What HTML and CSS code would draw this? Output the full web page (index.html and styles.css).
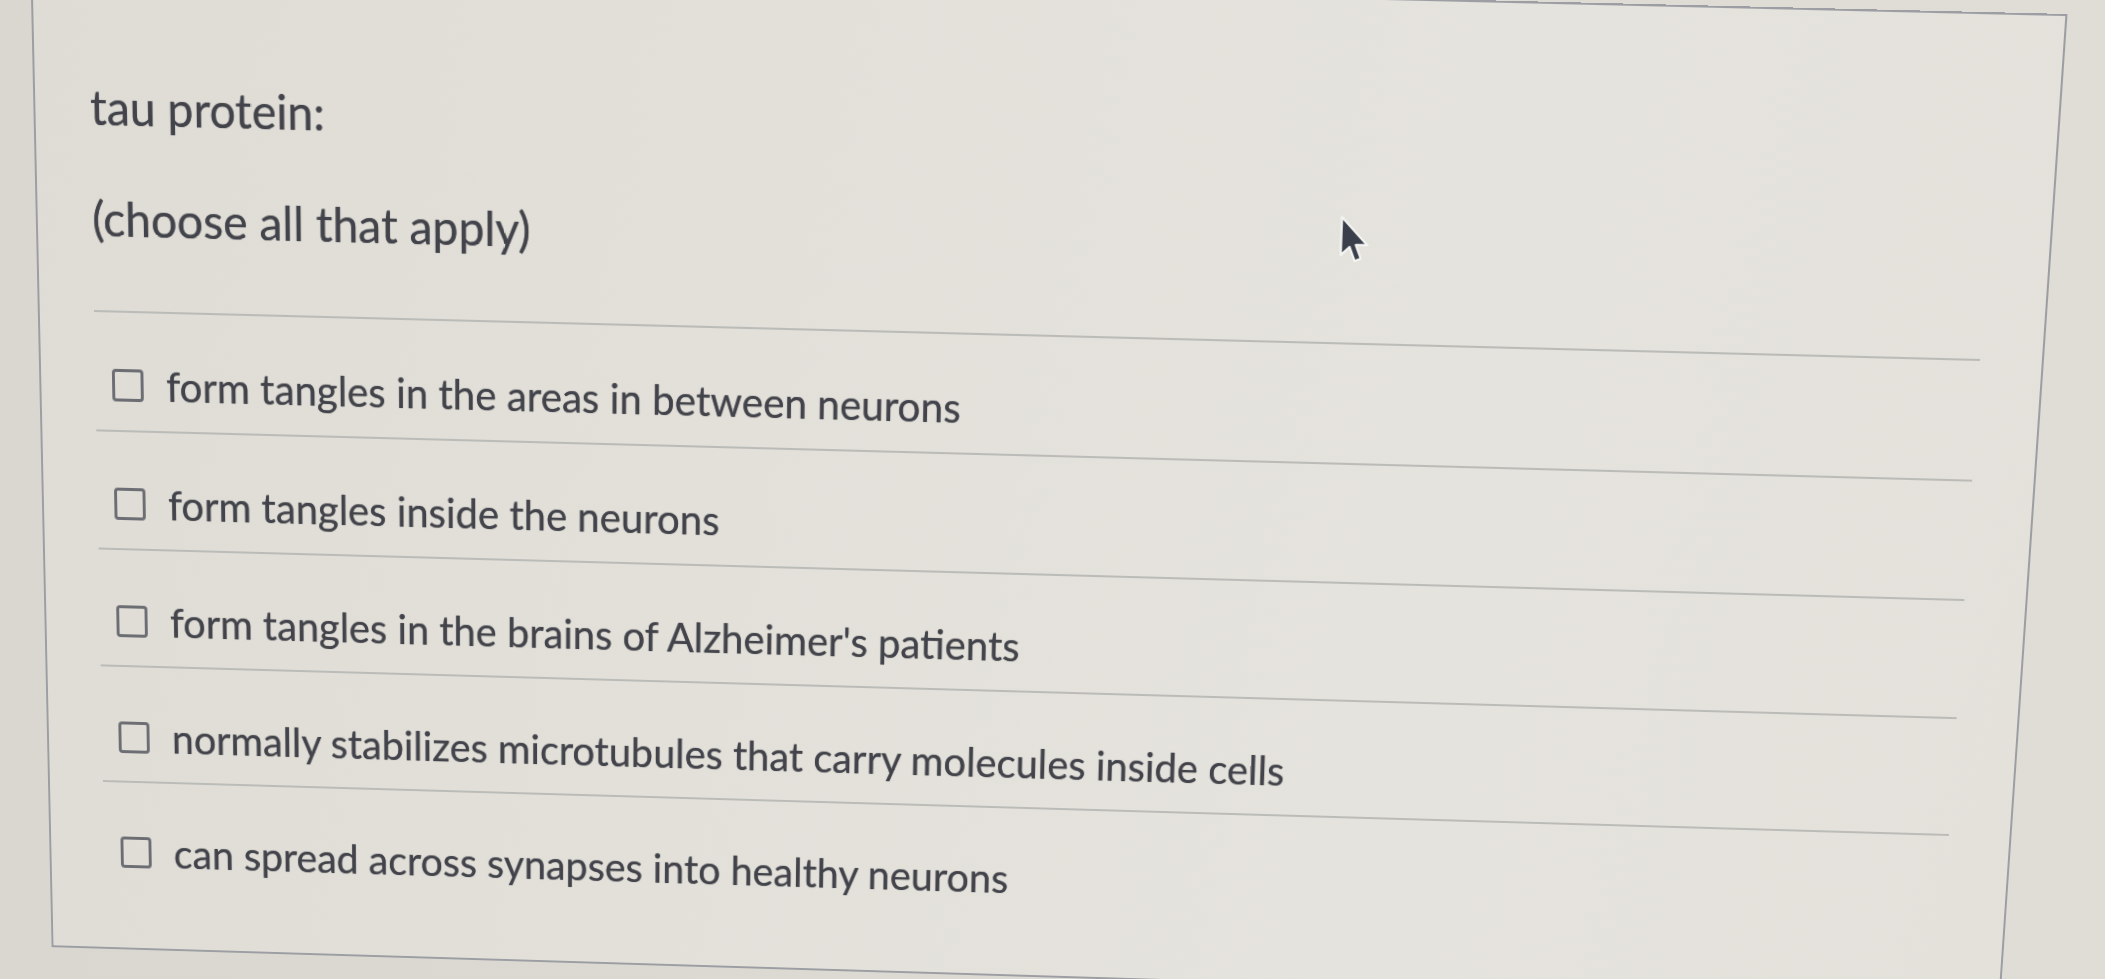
FILE: index.html
```html
<!DOCTYPE html>
<html lang="en">
<head>
<meta charset="utf-8">
<title>tau protein</title>
<link rel="stylesheet" href="styles.css">
</head>
<body>
<div class="screen">
  <div class="stage">
    <div class="panel">
      <div class="question">
        <p class="q-title">tau protein:</p>
        <p class="q-hint">(choose all that apply)</p>
      </div>
      <ul class="answers">
        <li class="answer"><span class="box"></span><span class="label">form tangles in the areas in between neurons</span></li>
        <li class="answer"><span class="box"></span><span class="label">form tangles inside the neurons</span></li>
        <li class="answer"><span class="box"></span><span class="label">form tangles in the brains of Alzheimer's patients</span></li>
        <li class="answer"><span class="box"></span><span class="label">normally stabilizes microtubules that carry molecules inside cells</span></li>
        <li class="answer"><span class="box"></span><span class="label">can spread across synapses into healthy neurons</span></li>
      </ul>
      <svg class="cursor" width="32" height="51" viewBox="0 0 26 42" aria-hidden="true">
        <path d="M2 2 L2 32 L9 25.5 L13.5 36.5 L18.5 34.5 L14 23.8 L23.5 23.8 Z" fill="#3a3f4b" stroke="#f4f4f2" stroke-width="1.8" stroke-linejoin="round"/>
      </svg>
    </div>
  </div>
</div>
</body>
</html>
```

FILE: styles.css
```css
html, body {
  margin: 0;
  padding: 0;
}

body {
  background: #dad8d0;
  font-family: Lato, "Open Sans", "Liberation Sans", sans-serif;
  color: #43444b;
}

.screen {
  width: 2105px;
  height: 979px;
  overflow: hidden;
  background: linear-gradient(90deg, #d9d7cf 0%, #dcdad3 50%, #dfddd6 100%);
}

.stage {
  display: flow-root;
  width: 2105px;
  height: 979px;
  transform-origin: 0 0;
  transform: matrix3d(0.999468, 0.023818, 0, -0.0000069655,
                      0.024282, 1.054414, 0, 0.000046469,
                      0, 0, 1, 0,
                      -6.2044, -14.8724, 0, 1);
}

.panel {
  position: relative;
  box-sizing: border-box;
  width: 2007px;
  height: 970px;
  margin: -19px 0 0 37px;
  padding: 0 61px 0 55px;
  border: 2px solid #9c9ea3;
  background: linear-gradient(100deg, #dedcd5 0%, #e2e0d9 35%, #e5e3dd 70%, #e3e1da 100%);
  text-shadow: 0 0 1px rgba(58, 59, 66, 0.75);
}

.question {
  padding-top: 103px;
}

.q-title,
.q-hint {
  margin: 0;
  font-size: 46.5px;
  line-height: 54px;
}

.q-hint {
  margin-top: 53px;
}

.answers {
  list-style: none;
  margin: 63px 0 0;
  padding: 0;
}

.answer {
  display: flex;
  align-items: center;
  gap: 23px;
  padding: 45px 0 18px 17px;
  border-top: 2px solid #bbbbb8;
  font-size: 40.7px;
  line-height: 52px;
}

.box {
  flex: none;
  box-sizing: border-box;
  width: 32px;
  height: 32px;
  border: 3px solid #6d6e74;
  border-radius: 4px;
}

.label {
  white-space: nowrap;
}

.cursor {
  position: absolute;
  left: 1302px;
  top: 204px;
}
```
